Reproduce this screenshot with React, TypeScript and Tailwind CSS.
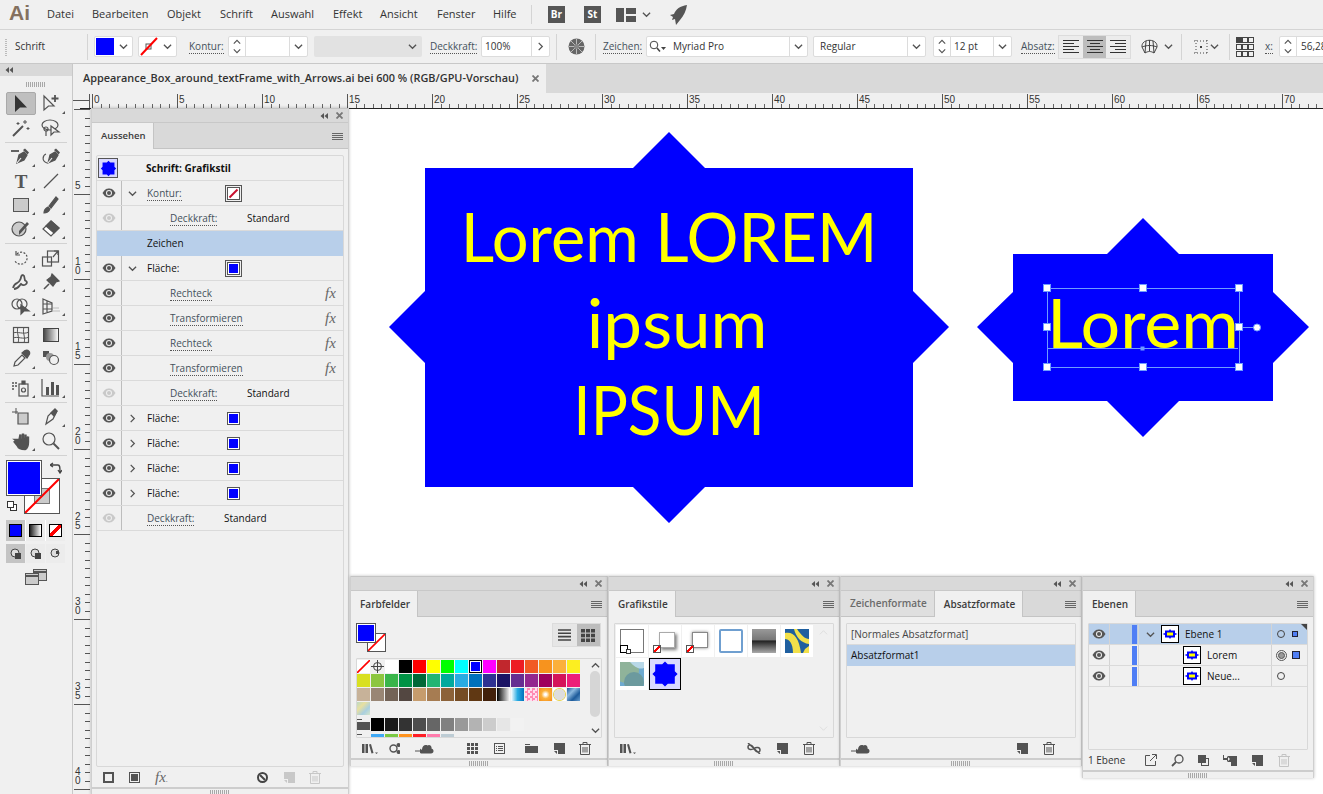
import type { ReactNode } from "react";

const G = "#535353";

const Chev = ({ dir = "down", size = 9 }: { dir?: string; size?: number }) => (
  <svg width={size} height={size} viewBox="0 0 10 10" fill="none" stroke={G} strokeWidth="1.4">
    {dir === "down" && <path d="M1 3 L5 7 L9 3" />}
    {dir === "up" && <path d="M1 7 L5 3 L9 7" />}
    {dir === "right" && <path d="M3 1 L7 5 L3 9" />}
  </svg>
);

const Eye = ({ off }: { off?: boolean }) => (
  <svg width="14" height="10" viewBox="0 0 14 10">
    <path d="M0.5 5 C3 1 5 0.5 7 0.5 C9 0.5 11 1 13.5 5 C11 9 9 9.5 7 9.5 C5 9.5 3 9 0.5 5 Z" fill={off ? "#c9c9c9" : "#555"} />
    <circle cx="7" cy="5" r="3" fill="#f0f0f0" />
    <circle cx="7" cy="5" r="2" fill={off ? "#c9c9c9" : "#555"} />
  </svg>
);

const Grip = () => <div className="w-[20px] h-[5px] bg-[repeating-linear-gradient(90deg,#a8a8a8_0_1px,transparent_1px_2px)]" />;

const Collapse = () => (
  <svg width="8" height="6" viewBox="0 0 8 6" fill="#555">
    <path d="M4 0 L0.5 3 L4 6 Z M8 0 L4.5 3 L8 6 Z" />
  </svg>
);

const CloseX = () => (
  <svg width="7" height="7" viewBox="0 0 7 7" stroke="#777" strokeWidth="1.8">
    <path d="M0.5 0.5 L6.5 6.5 M6.5 0.5 L0.5 6.5" />
  </svg>
);

const Burger = () => (
  <svg width="11" height="8" viewBox="0 0 11 8" stroke="#666">
    <path d="M0 .5 H11 M0 2.5 H11 M0 4.5 H11 M0 6.5 H11" />
  </svg>
);

const Trash = ({ c = G }: { c?: string }) => (
  <svg width="12" height="13" viewBox="0 0 12 13" fill="none" stroke={c}>
    <path d="M0 2.5 H12 M4 2.5 V.5 H8 V2.5 M1.5 2.5 V12.5 H10.5 V2.5 M4 5 V10.5 M6 5 V10.5 M8 5 V10.5" />
  </svg>
);

const NewItem = ({ c = G }: { c?: string }) => (
  <svg width="11" height="11" viewBox="0 0 11 11" fill={c}>
    <path d="M0 0 H11 V11 H4 V7 H0 Z M0 8 H3 V11 Z" />
  </svg>
);

const Libs = () => (
  <svg width="16" height="11" viewBox="0 0 16 11" fill={G}>
    <path d="M0 1 H2.5 V10 H0 Z M3.5 1 H6 V10 H3.5 Z M7 1.5 L9 1 L11.5 10 L9.5 10.5 Z M13 9.5 H16 L14.5 11 Z" />
  </svg>
);

const Cloud = () => (
  <svg width="19" height="11" viewBox="0 0 19 11" fill={G}>
    <path d="M7 10.5 C4.5 10.5 4.5 7 7 6.5 C7 3 10 1 12.5 2.5 C14.5 1 17 3 16.5 5.5 C19.5 6.5 19 10.5 16 10.5 Z" />
    <path d="M0 7.5 H5 V5.5 L7.5 8 L5 10.5 V8.5 H0 Z" />
  </svg>
);

const Panel = ({ className, tabs, active = 0, tabText = "text-[10px]", children, foot }: { className: string; tabs: string[]; active?: number; tabText?: string; children: ReactNode; foot: ReactNode }) => (
  <div className={`absolute flex flex-col bg-[#f0f0f0] border-x border-[#cfcfcf] shadow-[0_0_3px_rgba(0,0,0,0.25)] ${className}`}>
    <div className="h-[14px] shrink-0 bg-[#d9d9d9] border-t border-[#c4c4c4] flex items-center justify-end gap-[8px] pr-[5px]">
      <Collapse />
      <CloseX />
    </div>
    <div className="h-[27px] shrink-0 bg-[#d9d9d9] border-t border-[#c8c8c8] flex relative">
      {tabs.map((t, i) => (
        <div
          key={t}
          className={`pl-[9px] pr-[7px] flex items-center font-semibold border-r border-[#c4c4c4] ${tabText} ${i === active ? "bg-[#f0f0f0] text-[#3c3c3c]" : "border-b bg-[#dfdfdf] text-[#6b6b6b]"}`}
        >
          {t}
        </div>
      ))}
      <div className="flex-1 border-b border-[#c4c4c4]" />
      <div className="absolute right-[5px] top-[10px]">
        <Burger />
      </div>
    </div>
    <div className="flex-1 min-h-0 px-[5px] pt-[6px]">{children}</div>
    {foot}
    <div className="h-[8px] shrink-0 border-t-2 border-[#cdcdcd] flex items-center justify-center">
      <Grip />
    </div>
  </div>
);

const Swatch = ({ double }: { double?: boolean }) => (
  <div className={`w-[13px] h-[13px] border border-[#555] p-px bg-white ${double ? "outline outline-1 outline-[#555] outline-offset-1" : ""}`}>
    <div className="w-full h-full bg-[#0000ff]" />
  </div>
);

const NoStroke = () => (
  <div className="w-[13px] h-[13px] border border-[#555] bg-white outline outline-1 outline-[#555] outline-offset-1">
    <svg viewBox="0 0 11 11" width="11" height="11" stroke="#c8102e" strokeWidth="2">
      <path d="M1.5 9.5 L9.5 1.5" />
    </svg>
  </div>
);

const Dotted = ({ children }: { children: string }) => (
  <span className="border-b border-dotted border-[#555] leading-[12px] text-[#45505c]">{children}</span>
);

const Row = ({ eye = "on", toggle, text, w = 104, value, swatch, fx, plain }: {
  eye?: string; toggle?: string; text: string; w?: number; value?: string; swatch?: ReactNode; fx?: boolean; plain?: boolean;
}) => (
  <div className="relative h-[25px] flex items-center border-b border-[#dadada] text-[10px] text-[#111] shrink-0">
    <div className="w-[25px] h-[24px] flex items-center justify-center border-r border-[#bdbdbd]">
      <Eye off={eye === "off"} />
    </div>
    <div className="w-[21px] flex justify-center">{toggle && <Chev dir={toggle} />}</div>
    <div className="shrink-0 pl-[4px]" style={{ width: w }}>
      {w > 100 && <span className="inline-block w-[23px]" />}
      {plain ? <span>{text}</span> : <Dotted>{text}</Dotted>}
    </div>
    {swatch && <div className="ml-[7px]">{swatch}</div>}
    {value && <span>{value}</span>}
    {fx && <span className="absolute left-[228px] font-['Liberation_Serif',serif] italic text-[15px] text-[#666]">fx</span>}
  </div>
);

const Arrow = (
  <svg width="18" height="20" viewBox="0 0 18 20" fill="#333"><path d="M3 1 V18 L8 13.5 H15 Z" /></svg>
);

const Tip = ({ children, tip = true }: { children: ReactNode; tip?: boolean }) => (
  <div className="relative w-[30px] h-[24px] flex items-center justify-center">
    {children}
    {tip && <span className="absolute right-[1px] bottom-[2px] w-0 h-0 border-l-[3px] border-l-transparent border-b-[3px] border-b-[#555]" />}
  </div>
);

const I = ({ children, w = 20, h = 20 }: { children: ReactNode; w?: number; h?: number }) => (
  <svg width={w} height={h} viewBox="0 0 20 20" fill="none" stroke={G} strokeWidth="1.2">{children}</svg>
);

const Nib = ({ x = 0 }: { x?: number }) => (
  <g transform={`translate(${x} 0)`}>
    <path d="M6 16 L8 8 L13 5 L16 8 L13 13 Z" fill={G} />
    <path d="M12 3 L14 1.5 L18 5.5 L16.5 7.5 Z" fill={G} stroke="none" />
    <path d="M6 16 L10 11" stroke="#f0f0f0" />
  </g>
);

const tools: [ReactNode, ReactNode][][] = [
  [
    [
      <div key="s" className="w-[30px] h-[23px] rounded-[2px] bg-[#bfbfbf] border border-[#a9a9a9] flex items-center justify-center">{Arrow}</div>,
      <Tip key="d"><I><path d="M3 2 V16 L7.5 12 H13 Z" /><path d="M14 1 V8 M10.5 4.5 H17.5" strokeWidth="1.8" /></I></Tip>,
    ],
    [
      <Tip key="w" tip={false}><I><path d="M2 18 L12 8" strokeWidth="2" /><path d="M14 2 V6 M12 4 H16 M7 4 V7 M5.5 5.5 H8.5 M17 9 V12 M15.5 10.5 H18.5" strokeWidth="1" /></I></Tip>,
      <Tip key="l" tip={false}><I><ellipse cx="9" cy="7" rx="8" ry="5" /><circle cx="5" cy="11" r="2" /><path d="M5 13 V18" /><path d="M10 8 V17 L13 14 H18 Z" fill="#f0f0f0" /></I></Tip>,
    ],
  ],
  [
    [
      <Tip key="p"><I><path d="M0 4 H8" strokeWidth="1.8" /><Nib /></I></Tip>,
      <Tip key="c"><I><path d="M6 16 C0 14 2 8 5 7" /><Nib x={1} /></I></Tip>,
    ],
    [
      <Tip key="t"><span className="font-['Liberation_Serif',serif] font-semibold text-[19px] leading-none text-[#555]">T</span></Tip>,
      <Tip key="li"><I><path d="M3 17 L17 3" strokeWidth="1.3" /></I></Tip>,
    ],
    [
      <Tip key="r"><svg width="16" height="14"><rect x=".5" y=".5" width="15" height="13" fill="#cbcbcb" stroke="#555" /></svg></Tip>,
      <Tip key="b"><I><path d="M3 18 C3 14 5 13 7 12 L9 14 C8 16 7 18 3 18 Z" fill={G} /><path d="M8 11 L15 2 L17 4 L10 13 Z" fill={G} /></I></Tip>,
    ],
    [
      <Tip key="sh"><I><circle cx="8" cy="10" r="7" fill="#cbcbcb" /><path d="M8 16 L18 5 L16 3 L8 12 Z" fill={G} stroke="none" /></I></Tip>,
      <Tip key="e"><I><path d="M10 2 L18 9 L10 17 L2 10 Z" fill="#fff" /><path d="M10 2 L18 9 L13 14 L5 7 Z" fill={G} /></I></Tip>,
    ],
  ],
  [
    [
      <Tip key="ro"><I><path d="M6 6 C10 2 17 5 16 11 C15 17 7 18 4 13" strokeDasharray="2 1.5" /><path d="M5 3 V7 H9" /></I></Tip>,
      <Tip key="sc"><I><rect x="1.5" y="9" width="9" height="9" /><rect x="6.5" y="3" width="11" height="11" /><path d="M12 9 L17 3 M13 3 H17 V7" /></I></Tip>,
    ],
    [
      <Tip key="wa"><I><path d="M2 16 C4 9 7 13 9 8 C11 5 9 3 12 3 C15 4 12 8 15 9 C18 11 13 15 10 12 C8 14 7 17 3 17" strokeWidth="1.8" /></I></Tip>,
      <Tip key="pin"><I><path d="M11 2 L18 9 L15 10 L12 14 L6 8 L10 5 Z" fill={G} /><path d="M8 12 L3 17" strokeWidth="1.6" /></I></Tip>,
    ],
    [
      <Tip key="sb"><I><circle cx="6" cy="8" r="5" /><circle cx="11" cy="8" r="5" /><path d="M10 9 V18 L13 15 H18 Z" fill={G} /></I></Tip>,
      <Tip key="pe"><I><path d="M2 3 L11 7 V15 L2 18 Z M2 8 H11 M2 13 H11 M6 5 V16" /><path d="M12 12 H18 M11 15 H19" stroke="#bbb" /></I></Tip>,
    ],
  ],
  [
    [
      <Tip key="m" tip={false}><I><rect x="2.5" y="2.5" width="15" height="15" /><path d="M2 8 C7 6 12 10 18 7 M2 13 C7 11 12 15 18 12 M7 2 C5 8 9 12 7 18 M13 2 C11 8 15 12 13 18" strokeWidth="1" /></I></Tip>,
      <Tip key="g" tip={false}><svg width="16" height="14"><defs><linearGradient id="tg"><stop offset="0" stopColor="#444" /><stop offset="1" stopColor="#fff" /></linearGradient></defs><rect x=".5" y=".5" width="15" height="13" fill="url(#tg)" stroke="#444" /></svg></Tip>,
    ],
    [
      <Tip key="ey"><I><path d="M3 17 L4 13 L11 6 L14 9 L7 16 Z" /><path d="M11 4 L14 1.5 C17 0 20 3 18 6 L16 9 Z" fill={G} /></I></Tip>,
      <Tip key="bl" tip={false}><I><rect x="2" y="2" width="6" height="6" fill={G} stroke="none" /><circle cx="9" cy="8" r="4" fill="#999" stroke="none" /><circle cx="13" cy="11" r="4.5" fill="#f0f0f0" /></I></Tip>,
    ],
  ],
  [
    [
      <Tip key="sy"><I><path d="M1 5 H3 M4 5 H6 M1 8 H3 M4 8 H6 M1 11 H3" strokeWidth="1.6" /><rect x="8" y="6" width="9" height="12" /><circle cx="12.5" cy="12" r="2" /><path d="M11 3 H14 V6 H11 Z" fill={G} /></I></Tip>,
      <Tip key="gr"><I><path d="M1 1 V18 H18" /><path d="M5 9 H8 V17 H5 Z M10 4 H13 V17 H10 Z M15 7 H18 V17 H15 Z" fill={G} stroke="none" /></I></Tip>,
    ],
  ],
  [
    [
      <Tip key="ab" tip={false}><I><path d="M1 5 H7 M5 1 V7" strokeWidth="1" /><path d="M7 6 H17 V17 H7 Z" fill="#cbcbcb" /></I></Tip>,
      <Tip key="sl"><I><path d="M5 17 L7 9 L14 2 L16 4 L12 12 Z" /><path d="M10 6 L14 2 L16 4 L13 9 Z" fill={G} /></I></Tip>,
    ],
    [
      <Tip key="h"><I><path d="M3 10 L7 15 C8 18 12 18 14 18 C17 17 17 14 17 11 V5.5 M14.5 9 V3.5 M12 9 V2.5 M9.5 9 V3.5 L8 11 L5 9 Z" strokeWidth="2.4" fill={G} /></I></Tip>,
      <Tip key="z" tip={false}><I><circle cx="8" cy="8" r="6" /><path d="M12.5 12.5 L18 18" strokeWidth="2" /></I></Tip>,
    ],
  ],
];

const Sep = () => <div className="h-px mx-[5px] my-[2px] bg-[#d2d2d2]" />;

const Toolbox = () => (
  <div className="w-[73px] shrink-0 border-r border-[#c8c8c8] bg-[#f0f0f0]">
    <div className="h-[12px] bg-[#d9d9d9] flex items-center pl-[5px]"><Collapse /></div>
    <div className="h-[16px] flex items-center justify-center"><Grip /></div>
    {tools.map((g, gi) => (
      <div key={gi}>
        {g.map((r, ri) => (
          <div key={ri} className="flex pl-[6px]">{r}</div>
        ))}
        <Sep />
      </div>
    ))}
    <div className="relative h-[60px]">
      <div className="absolute left-[24px] top-[20px] w-[36px] h-[36px] bg-white border border-[#555] flex items-center justify-center">
        <div className="w-[16px] h-[16px] bg-[#cbcbcb] border border-[#777]" />
        <svg className="absolute inset-0" viewBox="0 0 34 34" stroke="#ff0000" strokeWidth="2"><path d="M0 34 L34 0" /></svg>
      </div>
      <div className="absolute left-[6px] top-[2px] w-[36px] h-[36px] border border-[#555] bg-white p-px">
        <div className="w-full h-full bg-[#0000ff]" />
      </div>
      <svg className="absolute left-[50px] top-[4px]" width="12" height="12" viewBox="0 0 12 12" fill="none" stroke="#444" strokeWidth="1.3">
        <path d="M1 3 H8 C10 3 10 5 10 10 M0 3 L3 1 M0 3 L3 5 M8 8 L10 11 L12 8" />
      </svg>
      <svg className="absolute left-[7px] top-[43px]" width="10" height="10" viewBox="0 0 10 10" fill="#fff" stroke="#333">
        <rect x="3.5" y="3.5" width="6" height="6" /><rect x=".5" y=".5" width="6" height="6" />
      </svg>
    </div>
    <div className="mx-[6px] mt-[2px] flex h-[21px] gap-px bg-[#fff] w-[59px]">
      <div className="w-[19px] bg-[#c4c4c4] flex items-center justify-center"><div className="w-[13px] h-[13px] bg-[#0000ff] border border-black" /></div>
      <div className="w-[19px] bg-[#ececec] flex items-center justify-center"><div className="w-[13px] h-[13px] border border-black bg-[linear-gradient(90deg,#222,#fff)]" /></div>
      <div className="w-[19px] bg-[#ececec] flex items-center justify-center"><div className="w-[13px] h-[13px] border border-black bg-[linear-gradient(135deg,#fff_38%,#ff0000_38%,#ff0000_62%,#fff_62%)]" /></div>
    </div>
    <div className="mx-[6px] mt-[3px] flex h-[19px] gap-px w-[59px]">
      {[0, 1, 2].map((i) => (
        <div key={i} className={`w-[19px] flex items-center justify-center ${i === 0 ? "bg-[#c4c4c4]" : "bg-[#ececec]"}`}>
          <svg width="12" height="12" viewBox="0 0 12 12"><circle cx="5" cy="5" r="4" fill="#ddd" stroke="#444" /><rect x={i === 2 ? 6 : 5} y={i === 2 ? 3 : 5} width={i === 2 ? 3 : 6} height={i === 2 ? 3 : 6} fill="#444" /></svg>
        </div>
      ))}
    </div>
    <div className="flex justify-center mt-[6px] pr-[1px]">
      <svg width="22" height="16" viewBox="0 0 22 16" fill="#cbcbcb" stroke="#555"><rect x="8.5" y=".5" width="13" height="11" /><path d="M8.5 3 H21.5" strokeWidth="2" /><rect x=".5" y="4.5" width="13" height="11" /><path d="M.5 7 H13.5" strokeWidth="2" /></svg>
    </div>
  </div>
);

const menu: [string, string][] = [
  ["Datei", "w-[45px]"], ["Bearbeiten", "w-[75px]"], ["Objekt", "w-[53px]"], ["Schrift", "w-[51px]"], ["Auswahl", "w-[62px]"],
  ["Effekt", "w-[47px]"], ["Ansicht", "w-[57px]"], ["Fenster", "w-[56px]"], ["Hilfe", "w-[38px]"],
];

const MenuBar = () => (
  <div className="h-[30px] shrink-0 bg-[#f0f0f0] border-b border-[#d4d4d4] flex items-center text-[11px] text-[#333]">
    <span className="w-[47px] pl-[9px] font-['Liberation_Sans',sans-serif] font-bold text-[21px] text-[#84705f] leading-none pb-[5px]">Ai</span>
    {menu.map(([t, w]) => (
      <span key={t} className={`${w} pb-[1px]`}>{t}</span>
    ))}
    <div className="w-px h-[19px] bg-[#d4d4d4]" />
    <span className="ml-[16px] w-[17px] h-[17px] bg-[#555] text-white text-[10px] font-bold flex items-center justify-center">Br</span>
    <span className="ml-[19px] w-[17px] h-[17px] bg-[#555] text-white text-[10px] font-bold flex items-center justify-center">St</span>
    <svg className="ml-[15px]" width="20" height="14" viewBox="0 0 20 14" fill="#555"><path d="M0 0 H8 V14 H0 Z M10 0 H20 V6 H10 Z M10 8 H20 V14 H10 Z" /></svg>
    <span className="ml-[6px]"><Chev /></span>
    <svg className="ml-[18px]" width="18" height="20" viewBox="0 0 18 20" fill="#555"><path d="M18 0 C11 1 7 4 5 9 L1 10 L4 12 L3 15 L6 14 L7 20 L11 15 C15 10 17 6 18 0 Z" /></svg>
  </div>
);

const Box = ({ className = "", children }: { className?: string; children?: ReactNode }) => (
  <div className={`h-[21px] bg-white border border-[#dcdcdc] rounded-[2px] flex items-center shrink-0 ${className}`}>{children}</div>
);

const Stepper = () => (
  <div className="w-[17px] h-full flex flex-col items-center justify-center border-r border-[#dcdcdc] gap-px">
    <Chev dir="up" size={8} /><Chev size={8} />
  </div>
);

const DropEnd = () => (
  <div className="ml-auto w-[18px] h-full flex items-center justify-center border-l border-[#dcdcdc]"><Chev /></div>
);

const VSep = ({ className = "" }: { className?: string }) => <div className={`w-px h-[26px] bg-[#d4d4d4] shrink-0 ${className}`} />;

const AlignIcon = ({ mode }: { mode: string }) => (
  <svg width="16" height="15" viewBox="0 0 16 15" stroke="#333">
    {mode === "l" && <path d="M0 .5 H16 M0 3.5 H11 M0 6.5 H16 M0 9.5 H11 M0 12.5 H16" />}
    {mode === "c" && <path d="M0 .5 H16 M3 3.5 H13 M0 6.5 H16 M3 9.5 H13 M0 12.5 H16" />}
    {mode === "r" && <path d="M0 .5 H16 M5 3.5 H16 M0 6.5 H16 M5 9.5 H16 M0 12.5 H16" />}
  </svg>
);

const Options = () => (
  <div className="h-[34px] shrink-0 bg-[#f0f0f0] border-b border-[#c8c8c8] flex items-center text-[10px] text-[#333] whitespace-nowrap overflow-hidden [&>*]:shrink-0">
    <div className="ml-[5px] w-[2px] h-[18px] bg-[repeating-linear-gradient(0deg,#bbb_0_1px,transparent_1px_2px)]" />
    <span className="ml-[8px] w-[72px]">Schrift</span>
    <VSep />
    <Box className="ml-[6px] w-[39px] pl-px">
      <div className="w-[18px] h-[17px] bg-[#0000ff]" />
      <div className="ml-auto w-[18px] flex justify-center"><Chev /></div>
    </Box>
    <Box className="ml-[5px] w-[39px]">
      <svg width="20" height="19" viewBox="0 0 20 19"><rect x="7" y="7" width="5" height="5" fill="none" stroke="#555" /><path d="M2 18 L18 1" stroke="#ff0000" strokeWidth="2" /></svg>
      <div className="ml-auto w-[17px] flex justify-center"><Chev /></div>
    </Box>
    <span className="ml-[12px] w-[39px]"><Dotted>Kontur:</Dotted></span>
    <Box className="w-[80px]"><Stepper /><DropEnd /></Box>
    <div className="ml-[6px] w-[108px] h-[21px] bg-[#e2e2e2] rounded-[2px] flex items-center justify-end pr-[5px]"><Chev /></div>
    <span className="ml-[8px] w-[51px]"><Dotted>Deckkraft:</Dotted></span>
    <Box className="w-[69px] pl-[3px]">100%<div className="ml-auto w-[18px] h-full flex items-center justify-center border-l border-[#dcdcdc]"><Chev dir="right" /></div></Box>
    <VSep className="ml-[6px]" />
    <svg className="ml-[11px]" width="17" height="17" viewBox="0 0 17 17"><circle cx="8.5" cy="8.5" r="8" fill="#666" /><path d="M8.5 1 V16 M1 8.5 H16 M3 3 L14 14 M14 3 L3 14" stroke="#bbb" /><circle cx="8.5" cy="8.5" r="2.5" fill="#888" /></svg>
    <VSep className="ml-[10px]" />
    <span className="ml-[7px] w-[43px]"><Dotted>Zeichen:</Dotted></span>
    <Box className="w-[162px]">
      <svg className="ml-[2px]" width="17" height="13" viewBox="0 0 17 13" fill="none" stroke="#444"><circle cx="5" cy="5" r="3.8" /><path d="M8 8 L11 11.5" strokeWidth="1.5" /><path d="M12 7 H17 L14.5 10 Z" fill="#444" stroke="none" /></svg>
      <span className="ml-[7px]">Myriad Pro</span><DropEnd />
    </Box>
    <Box className="ml-[5px] w-[113px] pl-[6px]">Regular<DropEnd /></Box>
    <Box className="ml-[7px] w-[79px]"><Stepper /><span className="ml-[3px]">12 pt</span><DropEnd /></Box>
    <span className="ml-[9px] w-[37px]"><Dotted>Absatz:</Dotted></span>
    <div className="h-[24px] w-[73px] flex border border-[#dcdcdc] bg-[#ececec]">
      <div className="flex-1 flex items-center justify-center pt-[2px]"><AlignIcon mode="l" /></div>
      <div className="flex-1 flex items-center justify-center pt-[2px] bg-[#bdbdbd]"><AlignIcon mode="c" /></div>
      <div className="flex-1 flex items-center justify-center pt-[2px]"><AlignIcon mode="r" /></div>
    </div>
    <svg className="ml-[10px]" width="17" height="16" viewBox="0 0 17 16" fill="none" stroke="#444"><path d="M1 8 C0 -1 17 -1 16 8 L13 14 C10 12 7 12 4 14 Z M4 14 L5 2 M13 14 L12 2 M8.500 1 V12 M1 8 C6 6 11 6 16 8" /></svg>
    <span className="ml-[6px]"><Chev /></span>
    <VSep className="ml-[8px]" />
    <svg className="ml-[12px]" width="15" height="16" viewBox="0 0 15 16" fill="#444"><path d="M2 1 V15 M13 1 V15 M0 2 H15 M0 14 H15" stroke="#444" strokeDasharray="1 2" /><rect x="6" y="7" width="2" height="2" /></svg>
    <span className="ml-[1px]"><Chev /></span>
    <VSep className="ml-[10px]" />
    <svg className="ml-[6px]" width="18" height="20" viewBox="0 0 18 20" fill="none" stroke="#444"><rect x=".5" y=".5" width="5" height="5" fill="#444" /><rect x="6.5" y=".5" width="5" height="5" /><rect x="12.5" y=".5" width="5" height="5" /><rect x=".5" y="7.5" width="5" height="5" /><rect x="6.5" y="7.5" width="5" height="5" /><rect x="12.5" y="7.5" width="5" height="5" /><rect x=".5" y="14.5" width="5" height="5" /><rect x="6.5" y="14.5" width="5" height="5" /><rect x="12.5" y="14.5" width="5" height="5" /></svg>
    <span className="ml-[11px] w-[14px]"><Dotted>x:</Dotted></span>
    <Box className="w-[60px]"><Stepper /><span className="ml-[4px]">56,28</span></Box>
  </div>
);

const TopRuler = () => {
  const ticks = Array.from({ length: 146 }, (_, i) => 92 + i * 8.5);
  const labels = Array.from({ length: 15 }, (_, i) => i * 5);
  return (
    <svg className="block shrink-0" width="1250" height="16" viewBox="73 93 1250 16">
      <rect x="73" y="93" width="1250" height="16" fill="#f0f0f0" />
      {ticks.map((x, i) => (
        <path key={i} d={`M${Math.round(x) + 0.5} ${i % 10 === 0 ? 94 : 104} V108`} stroke={i % 10 === 0 ? "#555" : "#666"} />
      ))}
      {labels.map((n) => (
        <text key={n} x={94 + n * 17} y="103" fontSize="10" fill="#333" fontFamily="Liberation Sans, sans-serif">{n}</text>
      ))}
      <path d="M73 100.5 H89 M89.5 94 V109" stroke="#555" />
      <path d="M80 108.5 H1323" stroke="#222" />
    </svg>
  );
};

const LeftRuler = () => {
  const ticks = Array.from({ length: 82 }, (_, i) => 109 + i * 8.5);
  const labels = Array.from({ length: 8 }, (_, i) => (i + 1) * 5);
  return (
    <svg className="block shrink-0" width="18" height="685" viewBox="73 109 18 685">
      <rect x="73" y="109" width="18" height="685" fill="#f0f0f0" />
      {ticks.map((y, i) => (
        <path key={i} d={`M${i % 10 === 0 ? 74 : 85} ${Math.round(y) + 0.5} H90`} stroke="#555" />
      ))}
      {labels.map((n) => {
        const y = 109 + n * 17;
        const s = String(n);
        return s.split("").map((d, i) => (
          <text key={n + "-" + i} x="75" y={y - 5 - (s.length - 1 - i) * 9} fontSize="10" fill="#333" fontFamily="Liberation Sans, sans-serif">{d}</text>
        ));
      })}
    </svg>
  );
};

const swatchRows: string[][] = [
  ["bg-white", "bg-black", "bg-[#ff0000]", "bg-[#ffff00]", "bg-[#00ff00]", "bg-[#00ffff]", "SEL", "bg-[#ff00ff]", "bg-[#c1272d]", "bg-[#ed1c24]", "bg-[#f15a24]", "bg-[#f7931e]", "bg-[#fbb03b]", "bg-[#fcee21]"],
  ["bg-[#d9e021]", "bg-[#8cc63f]", "bg-[#39b54a]", "bg-[#009245]", "bg-[#006837]", "bg-[#22b573]", "bg-[#00a99d]", "bg-[#29abe2]", "bg-[#0071bc]", "bg-[#2e3192]", "bg-[#1b1464]", "bg-[#662d91]", "bg-[#93278f]", "bg-[#9e005d]", "bg-[#d4145a]", "bg-[#ed1e79]"],
  ["bg-[#c7b299]", "bg-[#998675]", "bg-[#736357]", "bg-[#534741]", "bg-[#c69c6d]", "bg-[#a67c52]", "bg-[#8c6239]", "bg-[#754c24]", "bg-[#603813]", "bg-[#42210b]", "bg-[linear-gradient(90deg,#000,#fff)]", "bg-[linear-gradient(90deg,#fff,#29abe2,#0071bc)]", "bg-[repeating-conic-gradient(#ff8ab4_0_25%,#fde_0_50%)] bg-[length:5px_5px]", "bg-[radial-gradient(circle,#fff_10%,#fbb03b_45%,#f7931e_90%)]", "bg-[radial-gradient(circle,#ddd_60%,#e8d44d_65%,#fff_75%)]", "bg-[linear-gradient(135deg,#1c5a9a,#8db9e0,#1c5a9a,#6ca0d0)]"],
  ["bg-[linear-gradient(135deg,#bcd9c5,#e8e0a0,#a9cfe0,#d7e6c8)]"],
];

const grays = ["bg-black", "bg-[#1a1a1a]", "bg-[#333]", "bg-[#4d4d4d]", "bg-[#666]", "bg-[#808080]", "bg-[#999]", "bg-[#b3b3b3]", "bg-[#ccc]", "bg-[#e6e6e6]", "bg-[#f2f2f2]"];
const brights = ["bg-[#3fa9f5]", "bg-[#7ac943]", "bg-[#ff931e]", "bg-[#ff1d25]", "bg-[#ff7bac]", "bg-[#bdccd4]"];

const Cell = ({ c }: { c: string }) =>
  c === "SEL" ? (
    <div className="w-[13px] h-[13px] border border-black bg-white p-px"><div className="w-full h-full bg-[#0000ff]" /></div>
  ) : (
    <div className={`w-[13px] h-[13px] ${c}`} />
  );

const Folder = () => (
  <svg width="13" height="11" viewBox="0 0 13 11" fill={G}><path d="M0 0 H5 V1 H0 Z M0 3 H13 V11 H0 Z" /></svg>
);

const Farbfelder = () => (
  <Panel
    className="left-[350px] top-[576px] w-[258px] h-[190px]"
    tabs={["Farbfelder"]}
    foot={
      <div className="h-[19px] shrink-0 flex items-center pl-[11px] text-[#555]">
        <Libs />
        <svg className="ml-[11px]" width="11" height="11" viewBox="0 0 11 11" fill="none" stroke={G} strokeWidth="1.4"><circle cx="4.5" cy="5.5" r="3.5" /><circle cx="9.5" cy="2" r="1.3" fill={G} /><circle cx="9.5" cy="9" r="1.3" fill={G} /></svg>
        <span className="ml-[15px]"><Cloud /></span>
        <svg className="ml-[33px]" width="14" height="11" viewBox="0 0 14 11" fill={G}><path d="M0 0 H3 V3 H0 Z M4 0 H7 V3 H4 Z M8 0 H11 V3 H8 Z M0 4 H3 V7 H0 Z M4 4 H7 V7 H4 Z M8 4 H11 V7 H8 Z M0 8 H3 V11 H0 Z M4 8 H7 V11 H4 Z M8 8 H11 V11 H8 Z" /></svg>
        <svg className="ml-[13px]" width="11" height="11" viewBox="0 0 11 11" fill="none" stroke={G}><rect x=".5" y=".5" width="10" height="10" /><path d="M2 3.5 H3 M4 3.5 H9 M2 5.5 H3 M4 5.5 H9 M2 7.5 H3 M4 7.5 H9" /></svg>
        <span className="ml-[20px]"><svg width="13" height="9" viewBox="0 0 13 9" fill={G}><path d="M0 0 H5 V1 H0 Z M0 2 H13 V9 H0 Z" /></svg></span>
        <span className="ml-[16px]"><NewItem /></span>
        <span className="ml-[14px]"><Trash /></span>
      </div>
    }
  >
    <div className="flex justify-between h-[29px] items-start">
      <div className="relative w-[32px] h-[30px]">
        <div className="absolute left-[11px] top-[10px] w-[19px] h-[19px] bg-white border border-[#555]">
          <svg className="absolute inset-0" viewBox="0 0 17 17" stroke="#ff0000" strokeWidth="1.6"><path d="M0 17 L17 0" /></svg>
        </div>
        <div className="absolute left-0 top-0 w-[20px] h-[20px] border border-[#555] p-px bg-white"><div className="w-full h-full bg-[#0000ff]" /></div>
      </div>
      <div className="flex w-[49px] h-[24px] bg-[#e6e6e6] border border-[#dcdcdc] mr-[1px]">
        <div className="flex-1 flex items-center justify-center">
          <svg width="13" height="12" viewBox="0 0 13 12" stroke="#444" strokeWidth="1.6"><path d="M0 1 H13 M0 4.300 H13 M0 7.600 H13 M0 11 H13" /></svg>
        </div>
        <div className="flex-1 bg-[#bdbdbd] flex items-center justify-center">
          <svg width="14" height="13" viewBox="0 0 14 13" fill="#444"><path d="M0 0 H4 V3.500 H0 Z M5 0 H9 V3.500 H5 Z M10 0 H14 V3.500 H10 Z M0 4.700 H4 V8.200 H0 Z M5 4.700 H9 V8.200 H5 Z M10 4.700 H14 V8.200 H10 Z M0 9.500 H4 V13 H0 Z M5 9.500 H9 V13 H5 Z M10 9.500 H14 V13 H10 Z" /></svg>
        </div>
      </div>
    </div>
    <div className="mt-[6px] h-[80px] w-[246px] border border-[#d8d8d8] rounded-[1px] relative overflow-hidden pt-px">
      <div className="flex gap-px">
        <div className="w-[13px] h-[13px] bg-white"><svg viewBox="0 0 13 13" width="13" height="13" stroke="#ff0000" strokeWidth="1.6"><path d="M0 13 L13 0" /></svg></div>
        <div className="w-[13px] h-[13px] flex items-center justify-center"><svg width="13" height="13" viewBox="0 0 13 13" fill="none" stroke="#444"><circle cx="6.500" cy="6.500" r="4" /><path d="M6.500 0 V13 M0 6.500 H13" /></svg></div>
        {swatchRows[0].map((c, i) => <Cell key={i} c={c} />)}
      </div>
      {swatchRows.slice(1).map((r, i) => (
        <div key={i} className="flex gap-px mt-px">
          {r.map((c, j) => <Cell key={j} c={c} />)}
        </div>
      ))}
      <div className="flex gap-px mt-[3px] items-center">
        <div className="w-[13px] flex justify-center"><Folder /></div>
        {grays.map((c, i) => <Cell key={i} c={c} />)}
      </div>
      <div className="flex gap-px mt-[3px]">
        <div className="w-[13px]"><Folder /></div>
        {brights.map((c, i) => <Cell key={i} c={c} />)}
      </div>
      <div className="absolute right-0 top-0 bottom-0 w-[12px] bg-[#f0f0f0] flex flex-col items-center justify-between py-[2px]">
        <Chev dir="up" />
        <div className="w-[10px] h-[46px] -mt-[8px] rounded-[5px] bg-[#d6d6d6]" />
        <Chev />
      </div>
    </div>
  </Panel>
);

const Star = ({ size, fill = "#0000ff" }: { size: number; fill?: string }) => (
  <svg width={size} height={size} viewBox="0 0 20 20" fill={fill}>
    <path d="M10 1 L12 3 H17 V8 L19 10 L17 12 V17 H12 L10 19 L8 17 H3 V12 L1 10 L3 8 V3 H8 Z" />
  </svg>
);

const Thumb = ({ children, sel }: { children?: ReactNode; sel?: boolean }) => (
  <div className={`w-[32px] h-[32px] flex items-center justify-center ${sel ? "border border-black bg-[#d8d8ff]" : "bg-white"}`}>{children}</div>
);

const MiniNo = () => (
  <div className="absolute left-[4px] bottom-[4px] w-[8px] h-[8px] bg-white border border-[#555] bg-[linear-gradient(135deg,#fff_38%,#ff0000_38%,#ff0000_62%,#fff_62%)]" />
);

const Grafikstile = () => (
  <Panel
    className="left-[608px] top-[576px] w-[232px] h-[190px]"
    tabs={["Grafikstile"]}
    foot={
      <div className="h-[19px] shrink-0 flex items-center pl-[11px]">
        <Libs />
        <svg className="ml-[111px]" width="14" height="11" viewBox="0 0 14 11" fill="none" stroke={G} strokeWidth="1.500"><path d="M1 4 C1 1 5 1 7 5.500 C9 10 13 10 13 7 C13 4 9 4 7 5.500 C5 7 1 7 1 4 Z M1 0 L13 11" /></svg>
        <span className="ml-[16px]"><NewItem /></span>
        <span className="ml-[15px]"><Trash /></span>
      </div>
    }
  >
    <div className="h-[115px] w-[220px] border border-[#d8d8d8] rounded-[1px] relative p-px">
      <div className="grid grid-cols-[repeat(6,32px)] gap-px">
        <Thumb>
          <div className="relative w-[24px] h-[24px] border border-[#777] bg-white">
            <div className="absolute -left-px -bottom-px w-[8px] h-[8px] border border-black bg-white" />
            <div className="absolute left-[5px] -bottom-[2px] w-[5px] h-[5px] border border-[#333] bg-white" />
          </div>
        </Thumb>
        <div className="relative">
          <Thumb><div className="ml-[3px] -mt-[2px] w-[16px] h-[16px] bg-white border border-[#aaa] shadow-[2px_2px_3px_rgba(0,0,0,0.5)]" /></Thumb>
          <MiniNo />
        </div>
        <div className="relative">
          <Thumb><div className="ml-[4px] -mt-[2px] w-[16px] h-[16px] bg-white border border-[#888] shadow-[0_0_3px_rgba(0,0,0,0.5)]" /></Thumb>
          <MiniNo />
        </div>
        <Thumb><div className="w-[24px] h-[24px] rounded-[2px] bg-white border-[2px] border-[#6f9fd0]" /></Thumb>
        <Thumb><div className="w-[24px] h-[24px] bg-[linear-gradient(180deg,#999_0,#777_45%,#222_50%,#aaa_100%)]" /></Thumb>
        <Thumb>
          <svg width="24" height="24" viewBox="0 0 24 24"><rect width="24" height="24" fill="#1f5f9f" /><path d="M0 4 C8 2 14 8 16 24 H8 C8 14 4 10 0 10 Z M12 0 C16 6 20 10 24 10 V15 C16 14 11 8 9 0 Z M20 20 L24 17 V24 H18 Z" fill="#f2e04a" /></svg>
        </Thumb>
        <Thumb>
          <svg width="24" height="24" viewBox="0 0 24 24"><rect width="24" height="24" fill="#6eaad0" /><circle cx="6" cy="8" r="13" fill="#8fb39a" /><circle cx="14" cy="20" r="10" fill="#6c9a9e" /><path d="M10 0 H24 V6 C18 8 14 4 10 0 Z" fill="#b8d8e8" /></svg>
        </Thumb>
        <Thumb sel><Star size={28} /></Thumb>
      </div>
      <div className="absolute right-[5px] top-[4px]"><svg width="9" height="9" viewBox="0 0 10 10" fill="none" stroke="#dcdcdc"><path d="M1 7 L5 3 L9 7" /></svg></div>
      <div className="absolute right-[5px] bottom-[4px]"><svg width="9" height="9" viewBox="0 0 10 10" fill="none" stroke="#dcdcdc"><path d="M1 3 L5 7 L9 3" /></svg></div>
    </div>
  </Panel>
);

const Absatz = () => (
  <Panel
    className="left-[840px] top-[576px] w-[242px] h-[190px]"
    tabs={["Zeichenformate", "Absatzformate"]}
    active={1}
    foot={
      <div className="h-[19px] shrink-0 flex items-center pl-[10px]">
        <Cloud />
        <span className="ml-[147px]"><NewItem /></span>
        <span className="ml-[15px]"><Trash /></span>
      </div>
    }
  >
    <div className="h-[115px] w-[230px] border border-[#d8d8d8] rounded-[1px] text-[10px]">
      <div className="h-[21px] flex items-center pl-[4px] text-[#444] border-b border-[#dadada]">[Normales Absatzformat]</div>
      <div className="h-[21px] flex items-center pl-[4px] text-[#111] bg-[#b8cfea]">Absatzformat1</div>
    </div>
  </Panel>
);

const LayerThumb = () => (
  <div className="w-[18px] h-[18px] border border-black bg-white flex items-center justify-center relative">
    <svg width="16" height="12" viewBox="0 0 16 12">
      <path fill="#0000ff" d="M8 1 L9 2.500 H13 V5 L15.500 6 L13 7 V9.500 H9 L8 11 L7 9.500 H3 V7 L.5 6 L3 5 V2.500 H7 Z" />
      <rect x="5" y="4.500" width="6" height="3" fill="#ffff00" />
    </svg>
  </div>
);

const LayerRow = ({ name, sel, x, meta }: { name: string; sel?: boolean; x: string; meta: ReactNode }) => (
  <div className={`h-[21px] flex items-center border-b border-[#dadada] text-[10px] text-[#111] ${sel ? "bg-[#b8cfea]" : ""}`}>
    <div className="w-[21px] h-full flex items-center justify-center border-r border-[#d4d4d4]"><Eye /></div>
    <div className="w-[22px] h-full border-r border-transparent" />
    <div className="w-[5px] h-[19px] bg-[#4f7ef5] mr-px" />
    <div className={`flex-1 h-full flex items-center border-l border-[#d4d4d4] ${x}`}>
      {sel && <span className="w-[22px] flex justify-center"><Chev /></span>}
      <LayerThumb />
      <span className="ml-[6px]">{name}</span>
    </div>
    <div className="w-[36px] h-full flex items-center border-l border-[#d4d4d4] relative">{meta}</div>
  </div>
);

const Ebenen = () => (
  <Panel
    className="left-[1082px] top-[576px] w-[232px] h-[202px]"
    tabs={["Ebenen"]}
    foot={
      <div className="h-[20px] shrink-0 flex items-center pl-[5px] text-[10px] text-[#333]">
        <span className="w-[57px]">1 Ebene</span>
        <svg width="12" height="12" viewBox="0 0 12 12" fill="none" stroke={G}><path d="M5 1.500 H.5 V11.500 H10.500 V7 M5 7 L11 1 M7 .5 H11.500 V5" /></svg>
        <svg className="ml-[14px]" width="13" height="13" viewBox="0 0 13 13" fill="none" stroke={G} strokeWidth="1.300"><circle cx="8" cy="5" r="4" /><path d="M5 8 L1 12" strokeWidth="1.800" /></svg>
        <svg className="ml-[14px]" width="11" height="11" viewBox="0 0 11 11" fill="none" stroke={G}><rect x="3.500" y="3.500" width="7" height="7" /><rect x=".5" y=".5" width="7" height="7" fill={G} /></svg>
        <svg className="ml-[14px]" width="14" height="11" viewBox="0 0 14 11" fill={G}><path d="M5 1 H14 V11 H8 V7 H5 Z M0 0 V5 H4 V7 L7 4 L4 1 V3 H1 V0 Z" /></svg>
        <span className="ml-[15px]"><NewItem /></span>
        <span className="ml-[15px]"><Trash c="#c4c4c4" /></span>
      </div>
    }
  >
    <div className="h-[127px] w-[220px] border border-[#d8d8d8] rounded-[1px] relative">
      <LayerRow
        name="Ebene 1"
        sel
        x="pl-[0px]"
        meta={
          <>
            <span className="absolute left-[5px] w-[8px] h-[8px] rounded-full border border-[#444]" />
            <span className="absolute left-[20px] w-[6px] h-[6px] bg-[#4f7ef5] border border-[#223]" />
            <span className="absolute right-0 top-0 w-0 h-0 border-l-[6px] border-l-transparent border-t-[6px] border-t-[#444]" />
          </>
        }
      />
      <LayerRow
        name="Lorem"
        x="pl-[44px]"
        meta={
          <>
            <span className="absolute left-[4px] w-[11px] h-[11px] rounded-full border border-[#555] p-px"><span className="block w-full h-full rounded-full bg-[#999] border border-[#555]" /></span>
            <span className="absolute left-[20px] w-[8px] h-[8px] bg-[#4f7ef5] border border-[#223]" />
          </>
        }
      />
      <LayerRow
        name="Neue..."
        x="pl-[44px]"
        meta={<span className="absolute left-[5px] w-[8px] h-[8px] rounded-full border border-[#444]" />}
      />
    </div>
  </Panel>
);

const Aussehen = () => (
  <Panel
    className="left-[91px] top-[108px] w-[258px] h-[687px]"
    tabs={["Aussehen"]}
    tabText="text-[9.500px]"
    foot={
      <div className="h-[20px] shrink-0 flex items-center pl-[11px]">
        <svg width="11" height="11"><rect x="1" y="1" width="9" height="9" fill="none" stroke={G} strokeWidth="2" /></svg>
        <svg className="ml-[15px]" width="11" height="11"><rect x=".5" y=".5" width="10" height="10" fill="none" stroke={G} /><rect x="2" y="2" width="7" height="7" fill={G} /></svg>
        <span className="ml-[15px] w-[22px] font-['Liberation_Serif',serif] italic text-[15px] leading-none text-[#666]">fx<span className="text-[8px] not-italic">.</span></span>
        <span className="ml-[80px] w-[11px] h-[11px] rounded-full border-2 border-[#444] relative overflow-hidden"><span className="absolute left-[-2px] top-[3px] w-[12px] h-[2px] bg-[#444] rotate-45" /></span>
        <span className="ml-[16px]"><NewItem c="#c8c8c8" /></span>
        <span className="ml-[14px]"><Trash c="#c8c8c8" /></span>
      </div>
    }
  >
    <div className="h-[612px] -mx-px border border-[#d8d8d8] rounded-[2px] flex flex-col relative">
      <div className="h-[25px] shrink-0 flex items-center border-b border-[#dadada] text-[10px] font-bold text-[#111]">
        <div className="ml-[1px] w-[20px] h-[20px] border border-[#555] flex items-center justify-center bg-[#d8d8ff]"><Star size={17} /></div>
        <span className="ml-[28px]">Schrift: Grafikstil</span>
      </div>
      <Row toggle="down" text="Kontur:" w={77} swatch={<NoStroke />} />
      <Row eye="off" text="Deckkraft:" value="Standard" />
      <div className="h-[25px] flex items-center bg-[#b8cfea] text-[10px] text-[#111] pl-[50px] shrink-0">Zeichen</div>
      <Row toggle="down" plain text="Fläche:" w={77} swatch={<Swatch double />} />
      <Row text="Rechteck" fx />
      <Row text="Transformieren" fx />
      <Row text="Rechteck" fx />
      <Row text="Transformieren" fx />
      <Row eye="off" text="Deckkraft:" value="Standard" />
      {[0, 1, 2, 3].map((i) => (
        <Row key={i} toggle="right" plain text="Fläche:" w={77} swatch={<Swatch />} />
      ))}
      <Row eye="off" text="Deckkraft:" w={81} value="Standard" />
    </div>
  </Panel>
);

const Canvas = () => (
  <div className="flex-1 relative bg-white overflow-hidden font-['Lato',sans-serif] text-[#ffff00]">
    <svg className="absolute inset-0" width="1232" height="685" viewBox="91 109 1232 685">
      <path fill="#0000ff" d="M669 132 L705 168 H913 V291 L949 327 L913 363 V487 H705 L669 523 L633 487 H425 V363 L389 327 L425 291 V168 H633 Z" />
      <path fill="#0000ff" d="M1143 218 L1179 254 H1273 V292 L1309 327 L1273 363 V401 H1179 L1143 437 L1107 401 H1013 V363 L977 327 L1013 292 V254 H1107 Z" />
    </svg>
    <div className="absolute left-[334px] top-[83.500px] w-[488px] text-center text-[68px] leading-[86.500px] whitespace-nowrap">
      <div className="scale-x-[0.956]">Lorem LOREM</div>
      <div className="pl-[16px] scale-x-[1.017]">ipsum</div>
      <div className="scale-x-[0.912]">IPSUM</div>
    </div>
    <div className="absolute left-[956px] top-[170px] w-[192px] text-center text-[68px] leading-[85px] scale-x-[1.03]">Lorem</div>
    <svg className="absolute inset-0" width="1232" height="685" viewBox="91 109 1232 685" fill="#fff" stroke="#6f9cff">
      <path fill="none" d="M1047.500 288.500 H1239.500 V367.500 H1047.500 Z M1047 348.500 H1238 M1240 327.500 H1254" />
      {[[1047, 288], [1143, 288], [1239, 288], [1047, 327], [1239, 327], [1047, 367], [1143, 367], [1239, 367]].map(([x, y]) => (
        <rect key={x + "-" + y} x={x - 3.5} y={y - 3.5} width="7" height="7" />
      ))}
      <rect x="1141" y="347" width="3" height="3" fill="#6f9cff" />
      <circle cx="1257" cy="327.500" r="3.500" />
    </svg>
  </div>
);

export default function App() {
  return (
    <div className="relative w-[1323px] h-[794px] overflow-hidden flex flex-col bg-[#f0f0f0] font-['Open_Sans',sans-serif]">
      <MenuBar />
      <Options />
      <div className="flex-1 min-h-0 flex">
        <Toolbox />
        <div className="flex-1 min-w-0 flex flex-col">
          <div className="h-[29px] shrink-0 bg-[#d9d9d9] flex">
            <div className="w-[473px] bg-[#f0f0f0] flex items-center pl-[10px] pr-[7px] justify-between text-[10.900px] font-semibold text-[#333] whitespace-nowrap">
              <span>Appearance_Box_around_textFrame_with_Arrows.ai bei 600 % (RGB/GPU-Vorschau)</span>
              <CloseX />
            </div>
          </div>
          <TopRuler />
          <div className="flex-1 min-h-0 flex">
            <LeftRuler />
            <Canvas />
          </div>
        </div>
      </div>
      <Aussehen />
      <Farbfelder />
      <Grafikstile />
      <Absatz />
      <Ebenen />
    </div>
  );
}
